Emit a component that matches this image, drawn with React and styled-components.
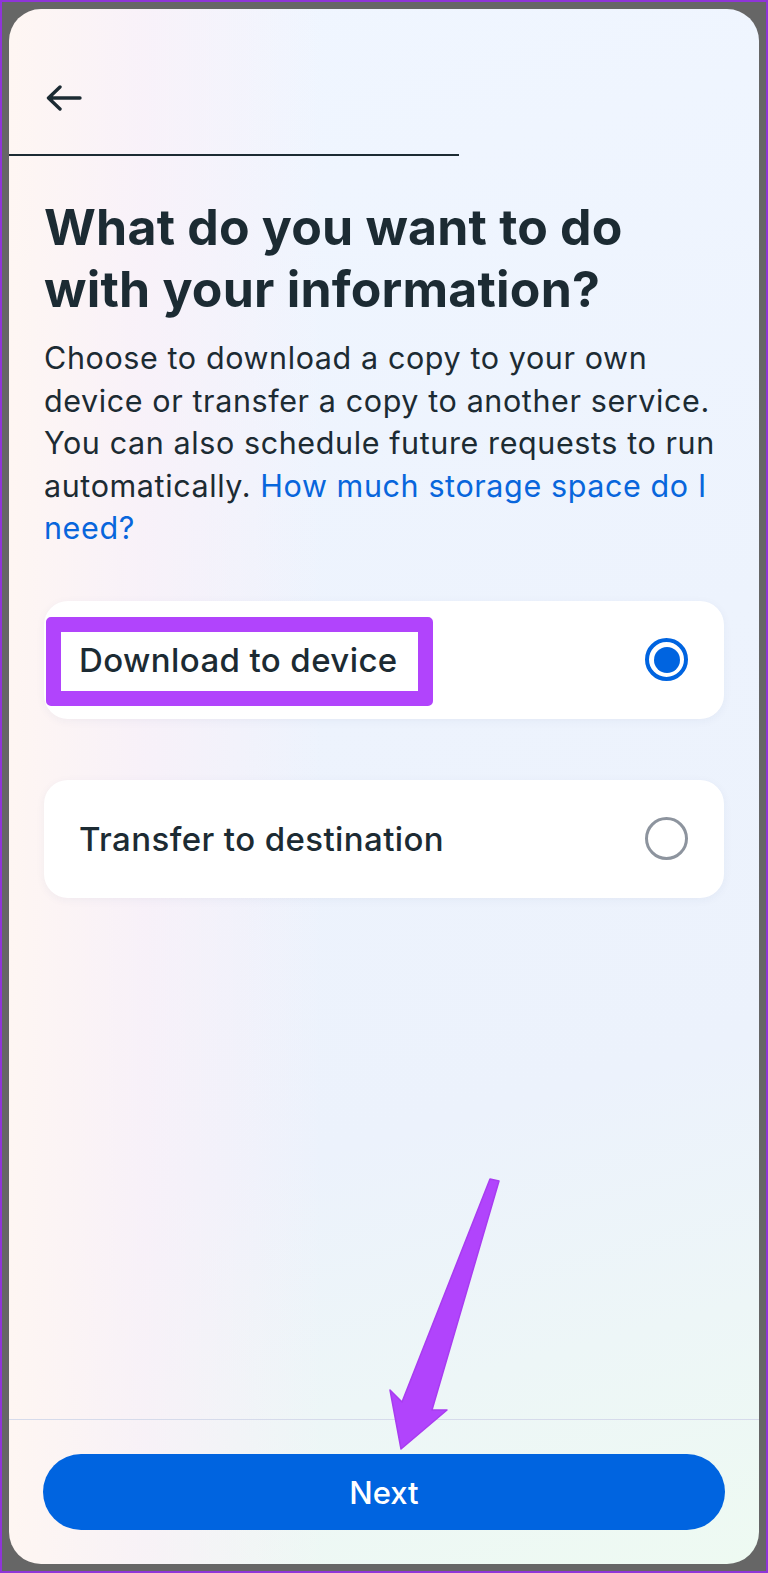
import React, { useState } from "react";
import styled, { createGlobalStyle } from "styled-components";

const GlobalStyle = createGlobalStyle`
  * { box-sizing: border-box; }
  body {
    margin: 0;
    background: #666666;
    font-family: Inter, "Noto Sans", sans-serif;
    -webkit-font-smoothing: antialiased;
  }
`;

const options = [
  { id: "download", label: "Download to device" },
  { id: "transfer", label: "Transfer to destination" }
];

function BackArrow() {
  return (
    <svg width="36" height="26" viewBox="0 0 36 26" fill="none">
      <path
        d="M14 2 L2.5 13 L14 24 M2.5 13 H34"
        stroke="#1c2b33"
        strokeWidth="3.4"
        strokeLinecap="round"
        strokeLinejoin="round"
      />
    </svg>
  );
}

function PointerArrow() {
  return (
    <svg width="125" height="285" viewBox="380 1170 125 285">
      <polygon
        points="490,1179 499,1181 432,1410 447,1410 401,1449 390,1390 402,1402"
        fill="#b144fc"
        stroke="#a83cf0"
        strokeWidth="1.5"
        strokeLinejoin="round"
      />
    </svg>
  );
}

function App() {
  const [choice, setChoice] = useState("download");

  return (
    <Frame>
      <GlobalStyle />
      <Card>
        <Header>
          <BackButton aria-label="Back">
            <BackArrow />
          </BackButton>
        </Header>
        <Progress>
          <ProgressFill style={{ width: "60%" }} />
        </Progress>
        <Content>
          <Title>
            What do you want to do
            <br />
            with your information?
          </Title>
          <Description>
            Choose to download a copy to your own
            <br />
            device or transfer a copy to another service.
            <br />
            You can also schedule future requests to run
            <br />
            automatically. <HelpLink href="#">How much storage space do I need?</HelpLink>
          </Description>
          <OptionList>
            {options.map(opt => (
              <Option key={opt.id} onClick={() => setChoice(opt.id)}>
                <OptionLabel>{opt.label}</OptionLabel>
                <Radio checked={choice === opt.id} />
                {opt.id === "download" && <Highlight />}
              </Option>
            ))}
          </OptionList>
        </Content>
        <Footer>
          <NextButton>Next</NextButton>
        </Footer>
        <ArrowMark>
          <PointerArrow />
        </ArrowMark>
      </Card>
    </Frame>
  );
}

const Frame = styled.div`
  width: 768px;
  height: 1573px;
  border: 2px solid #8f35d8;
  background: #666666;
  padding: 7px;
`;

const Card = styled.div`
  position: relative;
  width: 750px;
  height: 1555px;
  border-radius: 32px;
  overflow: hidden;
  display: flex;
  flex-direction: column;
  background:
    linear-gradient(90deg, rgba(255, 246, 242, 0.95) 0%, rgba(252, 240, 247, 0.7) 18%, rgba(255, 255, 255, 0) 42%),
    linear-gradient(165deg, #f0f6ff 0%, #edf3fd 45%, #ecf2fc 70%, #eefaf2 100%);
`;

const Header = styled.div`
  height: 145px;
  padding: 32px 0 0 37px;
  display: flex;
  align-items: center;
`;

const BackButton = styled.button`
  border: none;
  background: none;
  padding: 0;
  display: flex;
  cursor: pointer;
`;

const Progress = styled.div`
  height: 2px;
  width: 100%;
`;

const ProgressFill = styled.div`
  height: 100%;
  background: #1c2b33;
`;

const Content = styled.div`
  flex: 1;
  padding: 0 35px;
  display: flex;
  flex-direction: column;
`;

const Title = styled.h1`
  margin: 40px 0 0;
  font-size: 50px;
  line-height: 62px;
  font-weight: 700;
  color: #1c2b33;
  letter-spacing: 0.2px;
  white-space: nowrap;
`;

const Description = styled.p`
  margin: 17px 0 0;
  font-size: 30.5px;
  line-height: 42.5px;
  font-weight: 400;
  letter-spacing: 0.6px;
  color: #1c2b33;
`;

const HelpLink = styled.a`
  color: #0866dc;
  text-decoration: none;
`;

const OptionList = styled.div`
  margin-top: 51px;
  display: flex;
  flex-direction: column;
  gap: 61px;
`;

const Option = styled.div`
  position: relative;
  height: 118px;
  background: #ffffff;
  border-radius: 24px;
  box-shadow: 0 2px 10px rgba(40, 60, 110, 0.05);
  display: flex;
  align-items: center;
  justify-content: space-between;
  padding: 0 36px 0 35px;
  cursor: pointer;
`;

const OptionLabel = styled.span`
  font-size: 33px;
  font-weight: 500;
  letter-spacing: 0.4px;
  color: #1c2b33;
`;

const Radio = styled.span`
  width: 43px;
  height: 43px;
  border-radius: 50%;
  border: ${p => (p.checked ? "4.5px solid #0064e0" : "3.5px solid #8d949e")};
  display: flex;
  align-items: center;
  justify-content: center;
  &::after {
    content: "";
    width: 26px;
    height: 26px;
    border-radius: 50%;
    background: #0064e0;
    display: ${p => (p.checked ? "block" : "none")};
  }
`;

const Highlight = styled.span`
  position: absolute;
  left: 2px;
  top: 16px;
  width: 387px;
  height: 89px;
  border: 15px solid #b144fc;
  border-radius: 5px;
  pointer-events: none;
`;

const Footer = styled.div`
  border-top: 1px solid #d6dbeb;
  padding: 34px 34px 34px;
`;

const NextButton = styled.button`
  width: 100%;
  height: 76px;
  border: none;
  border-radius: 38px;
  background: #0064e0;
  color: #ffffff;
  font-family: Inter, "Noto Sans", sans-serif;
  font-size: 31px;
  font-weight: 500;
  cursor: pointer;
`;

const ArrowMark = styled.div`
  position: absolute;
  left: 371px;
  top: 1161px;
  pointer-events: none;
  line-height: 0;
`;

export default App;
